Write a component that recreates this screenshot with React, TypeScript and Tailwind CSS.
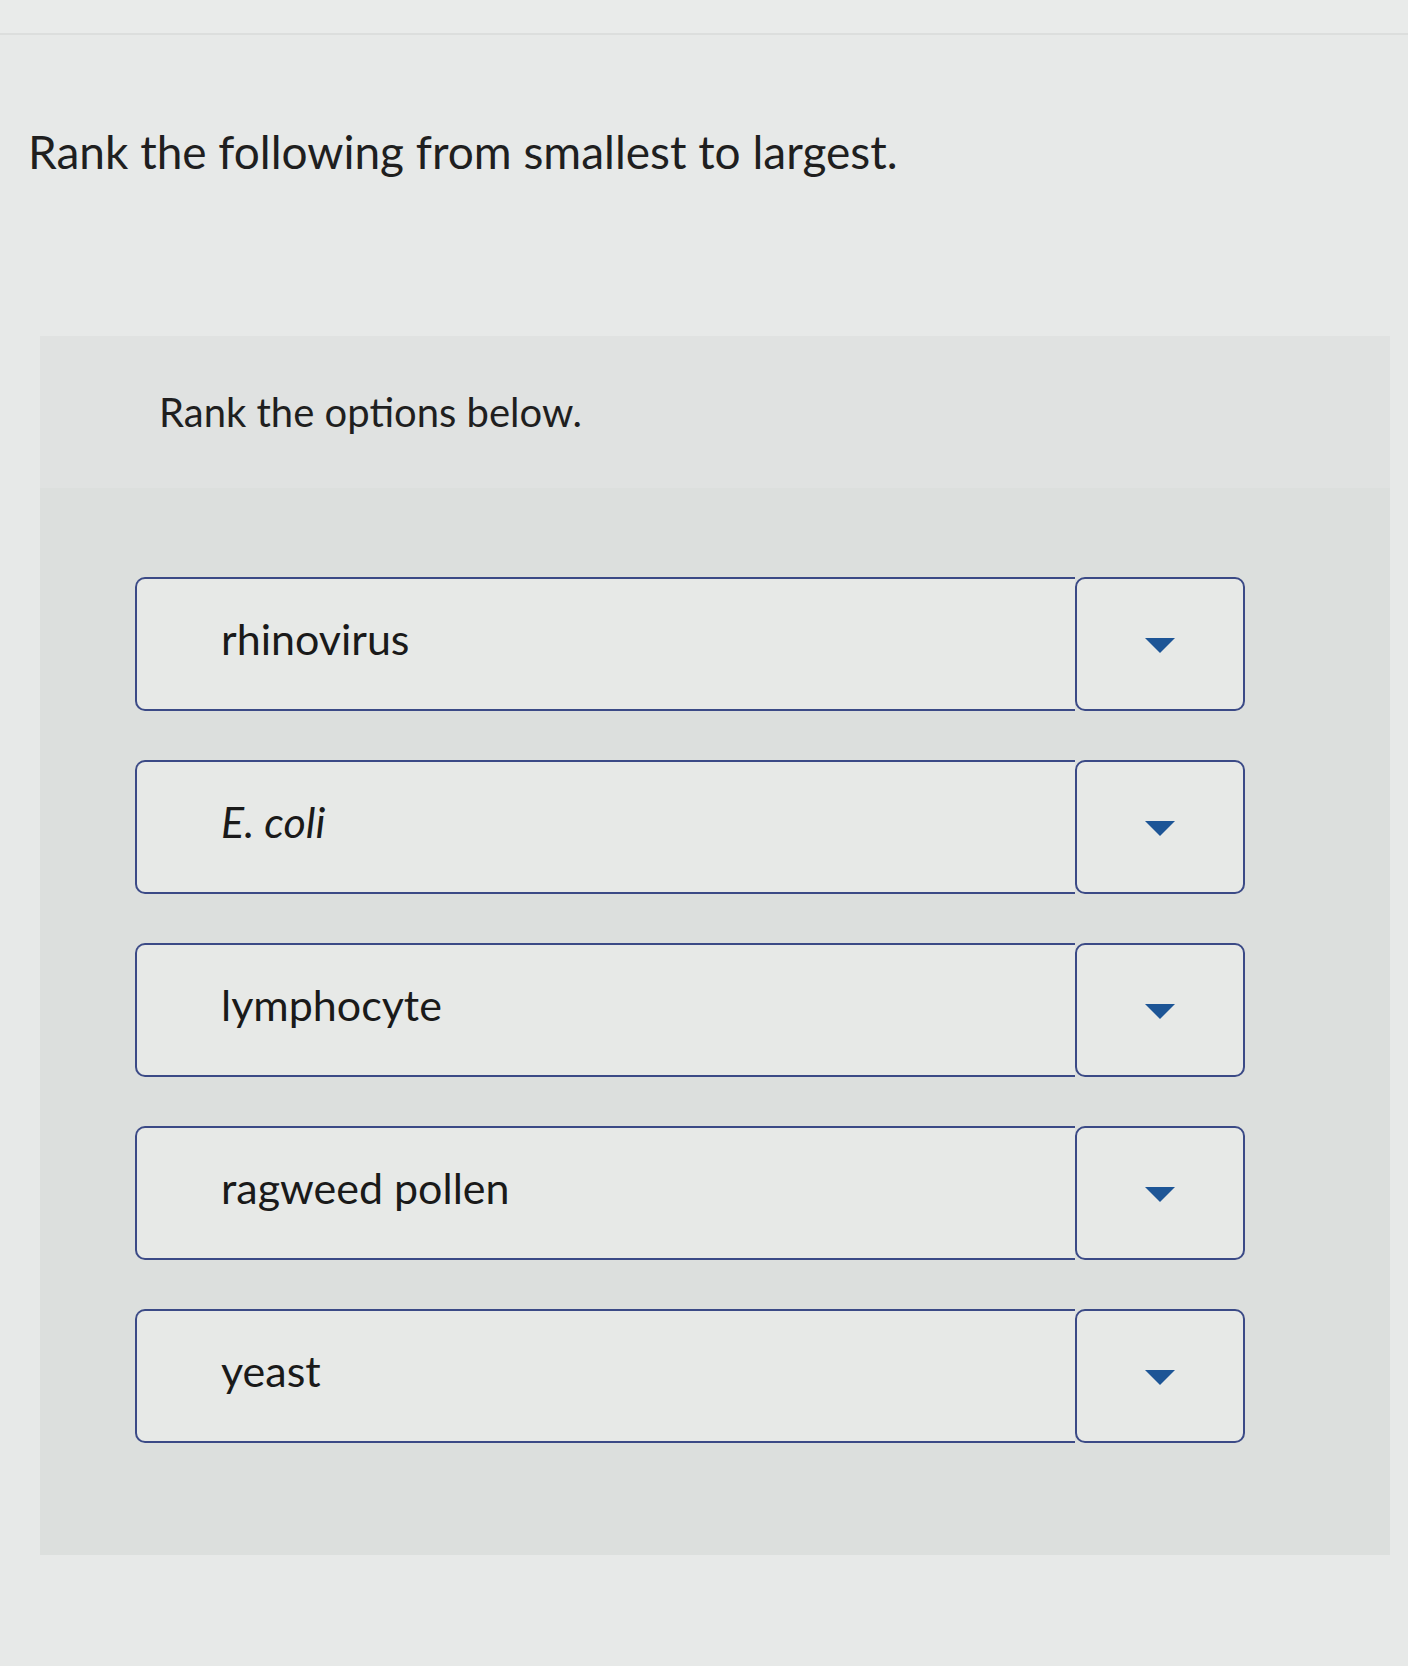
import React from "react";

const items: { label: string; italic?: boolean }[] = [
  { label: "rhinovirus" },
  { label: "E. coli", italic: true },
  { label: "lymphocyte" },
  { label: "ragweed pollen" },
  { label: "yeast" },
];

function Row({ label, italic }: { label: string; italic?: boolean }) {
  return (
    <div className="flex h-[134px] w-[1110px]">
      <div className="flex flex-1 items-center rounded-l-[10px] border-2 border-r-0 border-[#3b4a86] bg-[#e7e9e7] pl-[84px] pb-[10px]">
        <span
          className={
            "text-[43px] text-[#1a1a1a] " + (italic ? "italic" : "")
          }
        >
          {label}
        </span>
      </div>
      <div className="flex w-[170px] items-center justify-center rounded-[10px] border-2 border-[#3b4a86] bg-[#e7e9e7] pt-[4px]">
        <svg width="30" height="16" viewBox="0 0 30 16">
          <path d="M0 0 L30 0 L15 15 Z" fill="#1d5596" />
        </svg>
      </div>
    </div>
  );
}

export default function App() {
  return (
    <div
      className="min-h-[1666px] w-full bg-[#e7e9e8] text-[#1f1f1f]"
      style={{ fontFamily: "Lato, 'Open Sans', sans-serif" }}
    >
      <div className="h-[35px] border-b-2 border-[#dcdedd] bg-[#e9ebea]" />
      <div className="pl-[28px] pt-[89px] text-[46px] leading-[56px]">
        Rank the following from smallest to largest.
      </div>
      <div className="ml-[40px] mt-[156px] w-[1350px] bg-[#dcdfdd] pb-[112px]">
        <div className="flex h-[152px] items-center bg-[#e0e2e1] pl-[119px] text-[40px]">
          Rank the options below.
        </div>
        <div className="flex flex-col gap-[49px] pl-[95px] pt-[89px]">
          {items.map((it) => (
            <Row key={it.label} label={it.label} italic={it.italic} />
          ))}
        </div>
      </div>
    </div>
  );
}
